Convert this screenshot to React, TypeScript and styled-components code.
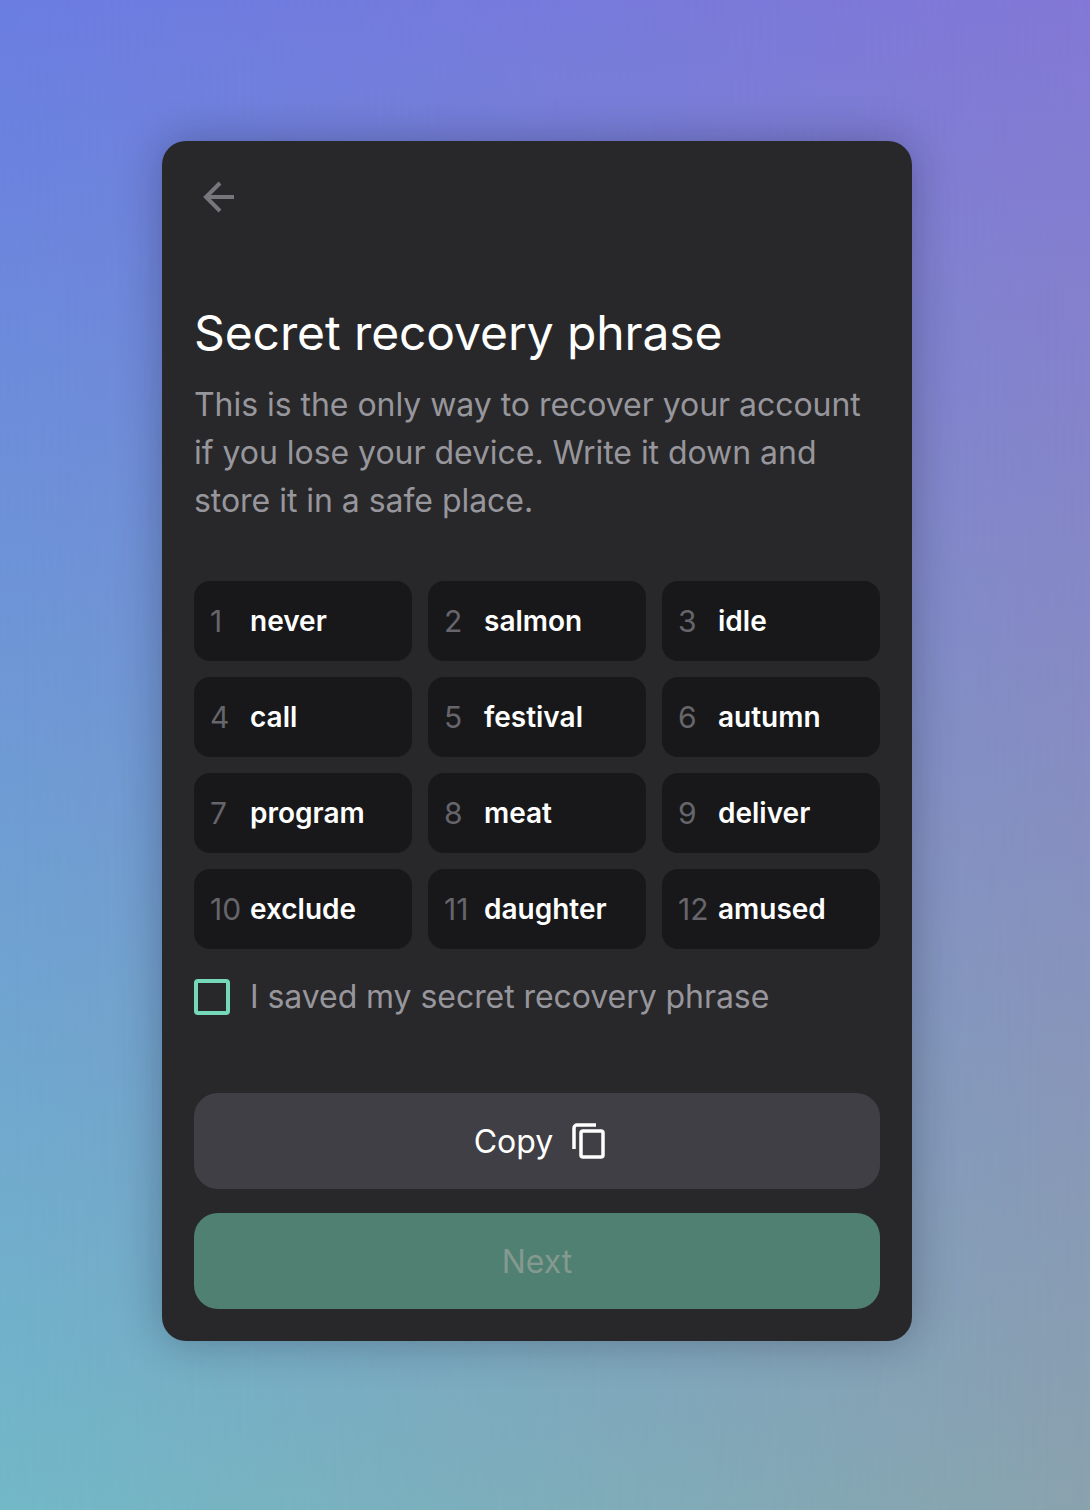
import styled, { createGlobalStyle } from 'styled-components';

const GlobalStyle = createGlobalStyle`
  html, body {
    margin: 0;
    padding: 0;
  }
  body {
    font-family: Inter, "Liberation Sans", sans-serif;
  }
`;

const Page = styled.div`
  width: 1090px;
  height: 1510px;
  padding: 141px 0 0 162px;
  box-sizing: border-box;
  display: flex;
  align-items: flex-start;
  background: linear-gradient(180deg, #8378d6 0%, #8aa3ae 100%);
  position: relative;
  overflow: hidden;
  &::before {
    content: '';
    position: absolute;
    inset: 0;
    background: linear-gradient(180deg, #6a7de1 0%, #72b8c7 100%);
    -webkit-mask-image: linear-gradient(to right, #000 0%, transparent 100%);
    mask-image: linear-gradient(to right, #000 0%, transparent 100%);
  }
`;

const Card = styled.div`
  position: relative;
  width: 750px;
  height: 1200px;
  box-sizing: border-box;
  padding: 32px;
  background: #28282a;
  border-radius: 24px;
  box-shadow: 0 0 44px rgba(20, 20, 40, 0.3);
  display: flex;
  flex-direction: column;
`;

const BackButton = styled.button`
  width: 48px;
  height: 48px;
  padding: 0;
  border: none;
  background: none;
  color: #77767c;
  display: flex;
  align-items: center;
  justify-content: center;
`;

const Title = styled.h1`
  margin: 80px 0 0;
  font-size: 48px;
  line-height: 64px;
  font-weight: 400;
  letter-spacing: -0.1px;
  color: #fff;
`;

const Description = styled.p`
  margin: 16px 0 0;
  font-size: 32px;
  line-height: 48px;
  font-weight: 400;
  letter-spacing: -0.04px;
  color: #97969c;
`;

const WordGrid = styled.div`
  margin-top: 56px;
  display: grid;
  grid-template-columns: repeat(3, 218px);
  grid-auto-rows: 80px;
  gap: 16px;
`;

const WordCell = styled.div`
  background: #18181a;
  border-radius: 16px;
  padding-left: 16px;
  display: flex;
  align-items: center;
`;

const WordNumber = styled.span`
  width: 40px;
  font-size: 30px;
  font-weight: 400;
  color: #66656b;
`;

const WordText = styled.span`
  font-size: 28px;
  font-weight: 600;
  color: #fff;
`;

const CheckRow = styled.label`
  margin-top: 30px;
  display: flex;
  align-items: center;
  gap: 20px;
`;

const CheckBox = styled.span`
  width: 36px;
  height: 36px;
  box-sizing: border-box;
  border: 4px solid #75d9b8;
  border-radius: 4px;
`;

const CheckLabel = styled.span`
  font-size: 32px;
  line-height: 36px;
  letter-spacing: -0.06px;
  color: #97969c;
`;

const Actions = styled.div`
  margin-top: auto;
  display: flex;
  flex-direction: column;
  gap: 24px;
`;

const ActionButton = styled.button<{ $primary?: boolean }>`
  height: 96px;
  border: none;
  border-radius: 24px;
  padding: 0;
  display: flex;
  align-items: center;
  justify-content: center;
  gap: 17px;
  font-family: inherit;
  font-size: 32px;
  font-weight: 400;
  background: ${(p) => (p.$primary ? '#4f8071' : '#403f45')};
  color: ${(p) => (p.$primary ? '#84998f' : '#fff')};
`;

const CopyIcon = styled.svg`
  margin-right: -6px;
`;

const words = [
  'never', 'salmon', 'idle',
  'call', 'festival', 'autumn',
  'program', 'meat', 'deliver',
  'exclude', 'daughter', 'amused',
];

export default function App() {
  return (
    <Page>
      <GlobalStyle />
      <Card>
        <BackButton aria-label="Back">
          <svg width="36" height="36" viewBox="0 0 36 36" fill="none" stroke="currentColor" strokeWidth="4">
            <path d="M34 18H6" />
            <path d="M20 4 6 18l14 14" />
          </svg>
        </BackButton>
        <Title>Secret recovery phrase</Title>
        <Description>
          This is the only way to recover your account if you lose your device. Write it down and store it in a safe place.
        </Description>
        <WordGrid>
          {words.map((word, i) => (
            <WordCell key={word}>
              <WordNumber>{i + 1}</WordNumber>
              <WordText>{word}</WordText>
            </WordCell>
          ))}
        </WordGrid>
        <CheckRow>
          <CheckBox />
          <CheckLabel>I saved my secret recovery phrase</CheckLabel>
        </CheckRow>
        <Actions>
          <ActionButton>
            Copy
            <CopyIcon width="36" height="40" viewBox="0 0 36 40" fill="none" stroke="currentColor" strokeWidth="3.5">
              <path d="M26 4H7a3 3 0 0 0-3 3v21" />
              <rect x="11" y="10" width="22" height="26" rx="2" />
            </CopyIcon>
          </ActionButton>
          <ActionButton $primary>Next</ActionButton>
        </Actions>
      </Card>
    </Page>
  );
}
